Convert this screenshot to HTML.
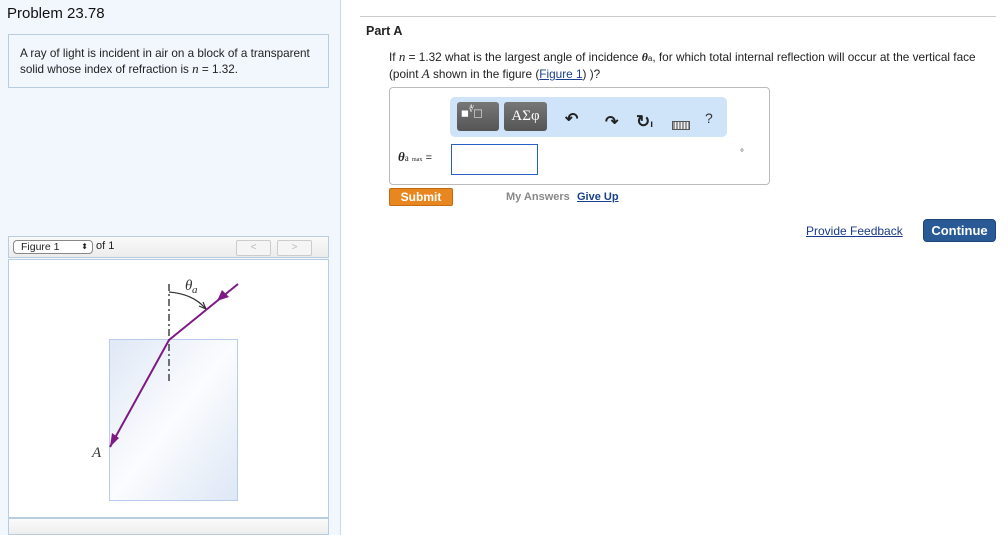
<!DOCTYPE html>
<html><head><meta charset="utf-8"><style>
*{margin:0;padding:0;box-sizing:border-box}
body{width:1008px;height:535px;overflow:hidden;background:#fff;font-family:"Liberation Sans",Arial,sans-serif;position:relative;color:#222}
.a{position:absolute}
.left{left:0;top:0;width:341px;height:535px;background:#f2f7fd;border-right:1px solid #c9d9ea}
.s{font-size:12px}
a{color:#1a3f8f}
</style></head><body>
<div class="a left"></div>
<div class="a" style="left:7px;top:5px;font-size:15px;color:#111">Problem 23.78</div>
<div class="a" style="left:8px;top:34px;width:321px;height:54px;border:1px solid #b8cde0;background:#f2f7fd"></div>
<div class="a s" style="left:20px;top:46px;line-height:15px;font-size:11.7px">A ray of light is incident in air on a block of a transparent<br>solid whose index of refraction is <i style="font-family:'Liberation Serif',serif;font-size:13px">n</i> = 1.32.</div>

<div class="a" style="left:8px;top:236px;width:321px;height:22px;border:1px solid #b8cde0;background:linear-gradient(#fafafa,#ececec)"></div>
<div class="a" style="left:13px;top:240px;width:80px;height:14px;border:1px solid #888;border-radius:4px;background:#fff;font-size:10.5px;padding-left:7px;line-height:12px">Figure 1<span style="position:absolute;right:4px;font-size:8px">⬍</span></div>
<div class="a" style="left:96px;top:240px;font-size:11px">of 1</div>
<div class="a" style="left:236px;top:240px;width:35px;height:16px;border:1px solid #ccc;border-radius:2px;background:#f5f5f5;color:#bbb;font-size:10px;text-align:center;line-height:14px">&lt;</div>
<div class="a" style="left:277px;top:240px;width:35px;height:16px;border:1px solid #ccc;border-radius:2px;background:#f5f5f5;color:#bbb;font-size:10px;text-align:center;line-height:14px">&gt;</div>
<div class="a" style="left:8px;top:259px;width:321px;height:259px;border:1px solid #b8cde0;background:#fff"></div>
<div class="a" style="left:8px;top:518px;width:321px;height:17px;border:1px solid #b8cde0;background:linear-gradient(#fafafa,#eee)"></div>
<svg class="a" style="left:0;top:0" width="341" height="535">
<defs><linearGradient id="g" x1="0" y1="0" x2="1" y2="1"><stop offset="0" stop-color="#dfe8f6"/><stop offset=".5" stop-color="#fbfcfe"/><stop offset="1" stop-color="#dde7f5"/></linearGradient></defs>
<rect x="109.5" y="339.5" width="128" height="161" fill="url(#g)" stroke="#b9cdea"/>
<line x1="169" y1="284" x2="169" y2="381" stroke="#444" stroke-width="1.5" stroke-dasharray="7,3,2,3"/>
<path d="M169 292 Q193 294 205 308" fill="none" stroke="#333" stroke-width="1.2"/>
<path d="M199 306 L206 309 L203 302" fill="none" stroke="#333" stroke-width="1.2"/>
<polyline points="238,284 169,340 110,447" fill="none" stroke="#7d1a85" stroke-width="2"/>
<path d="M217 301 L229 297 L222 290 Z" fill="#7d1a85"/>
<path d="M110 447 L112 433 L119 438 Z" fill="#7d1a85"/>
<text x="185" y="290" font-family="Liberation Serif,serif" font-style="italic" font-size="15" fill="#333">θ</text>
<text x="192" y="293" font-family="Liberation Serif,serif" font-style="italic" font-size="11" fill="#333">a</text>
<text x="92" y="457" font-family="Liberation Serif,serif" font-style="italic" font-size="15" fill="#333">A</text>
</svg>

<div class="a" style="left:360px;top:16px;width:636px;height:1px;background:#ccc"></div>
<div class="a" style="left:366px;top:24px;font-size:12.5px;font-weight:bold">Part A</div>
<div class="a" style="left:389px;top:49px;font-size:11.8px;line-height:15px">If <i style="font-family:'Liberation Serif',serif;font-size:13px">n</i> = 1.32 what is the largest angle of incidence <i style="font-family:'Liberation Serif',serif;font-weight:bold">θ</i><span style="font-size:8px">a</span>, for which total internal reflection will occur at the vertical face<br>(point <i style="font-family:'Liberation Serif',serif;font-size:13px">A</i> shown in the figure (<a href="#">Figure 1</a>) )?</div>
<div class="a" style="left:389px;top:87px;width:381px;height:98px;border:1px solid #bbb;border-radius:4px"></div>
<div class="a" style="left:450px;top:97px;width:277px;height:40px;background:#cfe3f9;border-radius:5px"></div>
<div class="a" style="left:457px;top:102px;width:42px;height:29px;background:linear-gradient(#777,#555);border-radius:3px;color:#fff;font-size:13px;padding:3px 0 0 4px">■<sup style="font-size:8px">∜</sup>□</div>
<div class="a" style="left:504px;top:102px;width:43px;height:29px;background:linear-gradient(#777,#555);border-radius:3px;color:#fff;font-family:'Liberation Serif',serif;font-size:15px;text-align:center;line-height:29px">ΑΣφ</div>
<div class="a" style="left:565px;top:109px;font-size:16px;color:#222;font-weight:bold">↶</div>
<div class="a" style="left:605px;top:112px;font-size:16px;color:#222;font-weight:bold">↷</div>
<div class="a" style="left:636px;top:112px;font-size:17px;color:#222;font-weight:bold">↻<span style="font-size:10px">ı</span></div>
<div class="a" style="left:672px;top:121px;width:18px;height:9px;border:1px solid #555;background:repeating-linear-gradient(90deg,#999 0 2px,#eee 2px 3px)"></div>
<div class="a" style="left:705px;top:110px;font-size:14px;color:#333">?</div>
<div class="a" style="left:398px;top:149px;font-family:'Liberation Serif',serif;font-size:13px"><i><b>θ</b></i><span style="font-size:9px">a</span> <span style="font-size:6px">max</span> <span style="font-family:'Liberation Sans';font-size:11px">=</span></div>
<div class="a" style="left:451px;top:144px;width:87px;height:31px;border:1px solid #2a5ec9"></div>
<div class="a" style="left:740px;top:148px;font-size:10px;color:#555">°</div>
<div class="a" style="left:389px;top:188px;width:64px;height:18px;background:#e8861f;border:1px solid #c46a10;border-radius:2px;color:#fff;font-weight:bold;font-size:12px;text-align:center;line-height:16px">Submit</div>
<div class="a" style="left:506px;top:191px;font-size:11px;font-weight:bold;color:#888">My Answers</div>
<div class="a" style="left:577px;top:191px;font-size:11px;font-weight:bold"><a href="#">Give Up</a></div>
<div class="a" style="left:806px;top:224px;font-size:12px"><a href="#" style="color:#1a3a8a">Provide Feedback</a></div>
<div class="a" style="left:923px;top:219px;width:73px;height:23px;background:#2a5a96;border-radius:4px;border:1px solid #1d4478;color:#fff;font-weight:bold;font-size:13px;text-align:center;line-height:21px">Continue</div>
</body></html>
